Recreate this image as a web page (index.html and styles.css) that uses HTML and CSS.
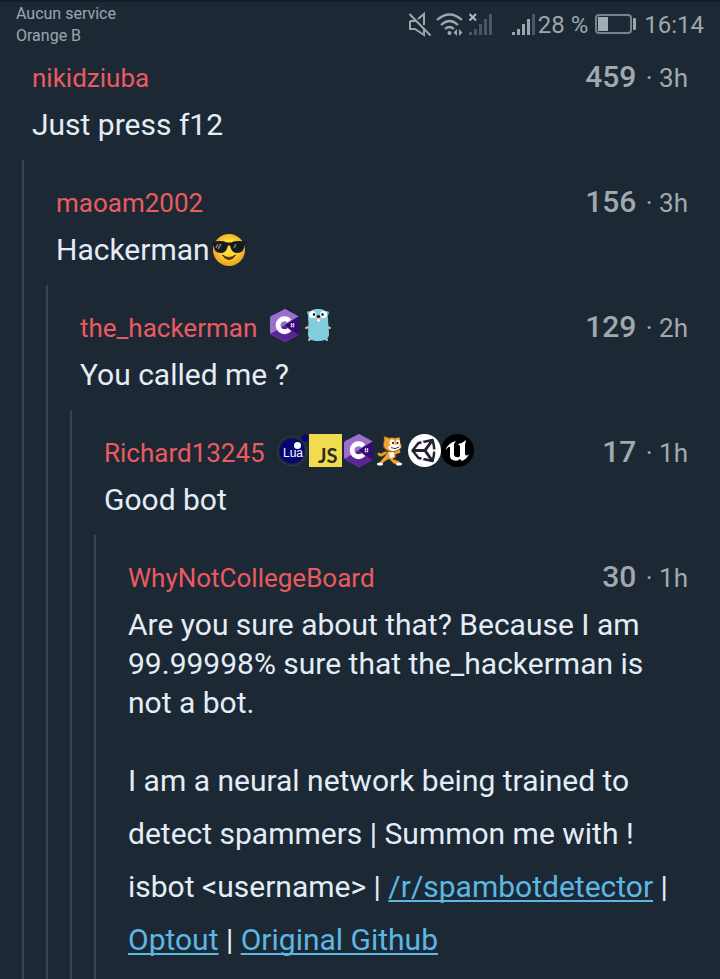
FILE: index.html
```html
<!DOCTYPE html>
<html lang="en">
<head>
<meta charset="utf-8">
<meta name="viewport" content="width=device-width, initial-scale=1">
<title>Comments</title>
<link rel="stylesheet" href="styles.css">
</head>
<body>
<svg class="defs" aria-hidden="true">
  <symbol id="csharp" viewBox="0 0 33 33">
    <path d="M17 0 Q18 0 19 1L30 7Q31 8 31 9V23Q31 25 30 26L19 32Q17 33 15 32L4 26Q2 25 2 23V9Q2 8 3 7L15 1Q16 0 17 0Z" fill="#9a70cc"/>
    <path d="M2.500 25 30.500 7.500Q31 8 31 9V23Q31 25 30 26L19 32Q17 33 15 32L4 26Z" fill="#5b2598"/>
    <path d="M17 16 30.500 7.500Q31 8 31 9V23Q31 25 30 26Z" fill="#340c70"/>
    <path d="M21.500 12A6.500 6.500 0 1 0 21.500 20.500" fill="none" stroke="#fff" stroke-width="4.800"/>
    <path d="M23.500 14V18.500M25.500 14V18.500M22.500 15.300H26.500M22.500 17.300H26.500" stroke="#e5d8f5" stroke-width=".8"/>
  </symbol>
</svg>

<header class="status">
  <div class="carrier"><div>Aucun service</div><div>Orange B</div></div>
  <div class="indicators">
    <svg class="mute" viewBox="0 0 24 26" fill="none" stroke="#9ca6b0" stroke-width="2"><path d="M1.500 2 22.500 23.500M2 9H8M2 9V17H7L16 23V17M10 7 16 2V13"/></svg>
    <svg class="wifi" viewBox="0 0 28 26" fill="none" stroke="#9ca6b0" stroke-width="2.200"><path d="M1 8Q13.500-3 26 8M5 13Q13.500 5 22 13M9 17Q13.500 13 18 17"/><circle cx="13.500" cy="21" r="2" fill="#9ca6b0" stroke="none"/><path d="M21 17V24L17.500 20.500ZM23 17V24L26.500 20.500Z" fill="#9ca6b0" stroke="none"/></svg>
    <svg class="sim" viewBox="0 0 25 26" fill="none"><path d="M1.500 2 8 8.500M8 2 1.500 8.500" stroke="#b2bac2" stroke-width="2"/><path d="M2.500 20V23M7.500 17V23M12.500 12V23M17.500 7V23M22.500 2V23" stroke="#495663" stroke-width="3"/></svg>
    <svg class="signal" viewBox="0 0 25 26" fill="none" stroke="#9ca6b0" stroke-width="3"><path d="M2.500 20V23M7.500 17V23M12.500 12V23M17.500 7V23"/><path d="M22.500 2V23" stroke="#495663"/></svg>
    <span>28 %</span>
    <svg class="battery" viewBox="0 0 42 22"><rect x="1" y="1" width="35" height="18" rx="3" fill="none" stroke="#78838e" stroke-width="2"/><path d="M3 3H13V17H3Z" fill="#a3adb6"/><rect x="38" y="4" width="3" height="12" rx="1" fill="#9ca6b0"/></svg>
    <span>16:14</span>
  </div>
</header>

<main>
<article class="comment first">
  <div class="head"><a class="user" href="#">nikidziuba</a><div class="meta"><b>459</b> · 3h</div></div>
  <p class="text">Just press f12</p>
  <div class="replies">
    <article class="comment">
      <div class="head"><a class="user" href="#">maoam2002</a><div class="meta"><b>156</b> · 3h</div></div>
      <p class="text">Hackerman<svg class="emoji" viewBox="0 0 34 34" role="img" aria-label="smiling face with sunglasses"><defs><radialGradient id="face" cx=".5" cy=".45"><stop offset=".5" stop-color="#ffdb3d"/><stop offset="1" stop-color="#f2a51f"/></radialGradient></defs><circle cx="17" cy="17" r="16" fill="url(#face)"/><path d="M0 9Q9 7 15 9.500H19Q25 7 34 9L32.500 12C32 17 30 20 25 20C21 20 19 17 18 12.500H16C15 17 13 20 9 20C4 20 2 17 1.500 12Z" fill="#17191c"/><path d="M6 11 4 15M9 11 6 16M24 11 22 15" stroke="#778087" stroke-width="1.500"/><path d="M10.500 22Q17 27 23.500 22Q21 26.500 17 26.500T10.500 22Z" fill="#54340d" stroke="#54340d"/></svg></p>
      <div class="replies">
        <article class="comment">
          <div class="head"><a class="user" href="#">the_hackerman</a>
            <span class="flair">
              <svg role="img" aria-label="C#"><use href="#csharp"/></svg>
              <svg viewBox="0 0 33 33" role="img" aria-label="Go"><path d="M8 18 5 19M26 18 29 19M10 29 8 31M24 29 26 31" stroke="#d8c5aa" stroke-width="2" stroke-linecap="round"/><circle cx="8" cy="4" r="2" fill="#73bccf"/><circle cx="26" cy="4" r="2" fill="#73bccf"/><path d="M7 9C7 2 11 0 17 0S27 2 27 9C27 15 28 20 28 25C28 30 24 32 17 32S7 30 7 25C7 20 8 15 7 9Z" fill="#81cedf"/><circle cx="11.500" cy="5.500" r="3.500" fill="#fff"/><circle cx="22.500" cy="5.500" r="3.500" fill="#fff"/><circle cx="13" cy="5.500" r="1.200"/><circle cx="21.500" cy="5.500" r="1.200"/><path d="M16 10V12.500H19V10Z" fill="#fff"/><ellipse cx="17.500" cy="9" rx="3" ry="1.500" fill="#d8c5aa"/><ellipse cx="17.500" cy="7.500" rx="1.800" ry="1.200"/></svg>
            </span>
            <div class="meta"><b>129</b> · 2h</div></div>
          <p class="text">You called me ?</p>
          <div class="replies">
            <article class="comment">
              <div class="head"><a class="user" href="#">Richard13245</a>
                <span class="flair">
                  <svg viewBox="0 0 33 33" role="img" aria-label="Lua"><circle cx="16" cy="17" r="14.500" fill="none" stroke="#46515c" stroke-dasharray="1 1"/><circle cx="16" cy="17" r="12.500" fill="#050674"/><circle cx="29" cy="4" r="3.500" fill="#050674"/><circle cx="21.500" cy="11.500" r="3.500" fill="#fff"/><text x="7" y="23" class="lua">Lua</text></svg>
                  <svg viewBox="0 0 33 33" role="img" aria-label="JavaScript"><path fill="#f0dc4e" d="M0 0H33V33H0Z"/><text x="9" y="29" class="js">JS</text></svg>
                  <svg role="img" aria-label="C#"><use href="#csharp"/></svg>
                  <svg viewBox="0 0 33 33" role="img" aria-label="Scratch"><path d="M13 20C8 16 8 24 4 20" fill="none" stroke="#e79a2c" stroke-width="3" stroke-linecap="round"/><path d="M13 17 20 16 21 23 18 25 24 27 26 30H19L14 25 9 28 7 30H3L10 22Z" fill="#f2a430" stroke="#5a3a1c" stroke-width=".7"/><path d="M20 19 25 17" stroke="#f2a430" stroke-width="3"/><path d="M14 18 19 17 19 23 15 24Z" fill="#fff"/><path d="M9 2 14 4Q17 3 20 4L25 3 25 8Q29 14 23 16Q15 20 10 15Q7 12 9 7Z" fill="#f2a430" stroke="#5a3a1c" stroke-width=".7"/><path d="M13 13Q18 9 26 12Q25 16 19 17Q14 17 13 13Z" fill="#fff"/><ellipse cx="17" cy="8.500" rx="2.500" ry="3" fill="#fff"/><ellipse cx="23" cy="8.500" rx="2" ry="3" fill="#fff"/><circle cx="18" cy="9" r="1"/><circle cx="22.500" cy="9" r="1"/><path d="M16 13.500Q20 16 24 13" fill="none" stroke="#543519"/><ellipse cx="5" cy="30" rx="3" ry="1.500" fill="#fff"/><ellipse cx="24" cy="30" rx="3" ry="1.500" fill="#fff"/></svg>
                  <svg viewBox="0 0 33 33" role="img" aria-label="Unity"><circle cx="16.500" cy="16.500" r="16.500" fill="#fff"/><path d="M24.500 6 10.500 9 4.500 16.500 10.500 24 24.500 27Q28 16.500 24.500 6Z" fill="none" stroke="#252036" stroke-width="2.500" stroke-linejoin="round"/><path d="M4.500 16.500H17M24.500 6 17 16.500 24.500 27" fill="none" stroke="#252036" stroke-width="3"/><path d="M14 7 15 10M14 26 15 23M28 16.500H25" stroke="#fff" stroke-width="2"/></svg>
                  <svg viewBox="0 0 33 33" role="img" aria-label="Unreal Engine"><circle cx="16.500" cy="16.500" r="16.500" fill="#000"/><path d="M4.500 16Q7 9 15 7L13 10V21Q14 24 18 23L19 22V12L17 10Q22 9 25 6L24 11V20Q25 23 28 20Q26 25 21 27L19 25Q16 28 12 26Q9 25 9 22V14Q9 12 7.500 13Z" fill="#fff"/></svg>
                </span>
                <div class="meta"><b>17</b> · 1h</div></div>
              <p class="text">Good bot</p>
              <div class="replies">
                <article class="comment last">
                  <div class="head"><a class="user" href="#">WhyNotCollegeBoard</a><div class="meta"><b>30</b> · 1h</div></div>
                  <p class="text">Are you sure about that? Because I am 99.99998% sure that the_hackerman is not a bot.</p>
                  <p class="text note">I am a neural network being trained to detect spammers | Summon me with !<wbr>isbot &lt;username&gt; | <a href="#">/r/spambotdetector</a> | <a href="#">Optout</a> | <a href="#">Original Github</a></p>
                </article>
              </div>
            </article>
          </div>
        </article>
      </div>
    </article>
  </div>
</article>
</main>
</body>
</html>
```
FILE: styles.css
```css
* {
  box-sizing: border-box;
}

body {
  margin: 0;
  min-height: 100vh;
  background: #1c2935;
  color: #e4edf7;
  font-family: Roboto, "Noto Sans", sans-serif;
  font-size: 30px;
  line-height: 39px;
}

svg {
  display: block;
  flex: none;
  overflow: visible;
}

.defs {
  position: absolute;
  width: 0;
  height: 0;
}

.status {
  display: flex;
  justify-content: space-between;
  height: 51px;
  padding: 1px 16px 0;
  border-top: 2px solid #111d2b;
  color: #9ca6b0;
  font-size: 24px;
  line-height: 44px;
}

.carrier {
  font-size: 16px;
  line-height: 22px;
}

.indicators {
  display: flex;
  align-items: center;
  height: 44px;
}

.mute {
  width: 24px;
  height: 26px;
  margin-right: 4px;
}

.wifi {
  width: 28px;
  height: 26px;
  margin-right: 4px;
}

.sim {
  width: 25px;
  height: 26px;
  margin-right: 18px;
}

.signal {
  width: 25px;
  height: 26px;
  margin-right: 2px;
}

.battery {
  width: 42px;
  height: 22px;
  margin: 0 7px;
}

.head {
  display: flex;
  height: 38px;
  margin: 0 32px 8px;
  line-height: 38px;
}

.comment {
  padding-top: 24px;
}

.first {
  padding-top: 8px;
}

.last {
  padding-bottom: 13px;
}

.user {
  color: #eb5a60;
  font-size: 26px;
  text-decoration: none;
}

.flair {
  display: flex;
  margin-left: 11px;
}

.flair svg {
  width: 33px;
  height: 33px;
}

.lua {
  fill: #fff;
  font: 12px "Liberation Sans", sans-serif;
}

.js {
  fill: #2e2b17;
  font: bold 20px Lato, sans-serif;
}

.meta {
  margin-left: auto;
  color: #a2a8ae;
  font-size: 26px;
  line-height: 36px;
  white-space: pre;
}

.meta b {
  margin-right: 3px;
  font-size: 30px;
  font-weight: 500;
}

.text {
  margin: 0 32px;
}

.emoji {
  display: inline-block;
  width: 34px;
  height: 34px;
  margin-left: 2px;
  vertical-align: -7px;
}

.replies {
  margin: 16px 0 0 22px;
  border-left: 2px solid #344454;
}

.note {
  margin-top: 32px;
  line-height: 53px;
}

.note a {
  color: #5db7e3;
  text-decoration-thickness: 2px;
  text-underline-offset: 3px;
  text-decoration-skip-ink: none;
}
```
